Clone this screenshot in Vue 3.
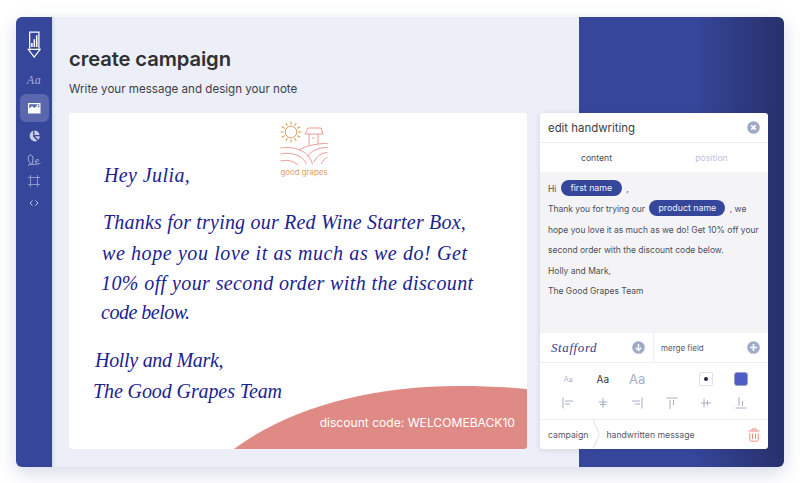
<script setup>
const sunRays = Array.from({ length: 12 }, (_, i) => i * 30)
const letterLines = [
  { text: 'Hey Julia,', cls: 'l1' },
  { text: 'Thanks for trying our Red Wine Starter Box,', cls: 'l2' },
  { text: 'we hope you love it as much as we do! Get', cls: 'l3' },
  { text: '10% off your second order with the discount', cls: 'l4' },
  { text: 'code below.', cls: 'l5' },
  { text: 'Holly and Mark,', cls: 'l6' },
  { text: 'The Good Grapes Team', cls: 'l7' }
]
</script>

<template>
  <div class="page">
    <div class="window">
      <aside class="sidebar">
        <svg class="brand" width="14" height="27" viewBox="0 0 14 28" fill="none" stroke="#fff">
          <path d="M2.5 18.5V1.2h9.6v17.3" stroke-width="1.3" />
          <path d="M1 19h12.4L7.2 27z" stroke-width="1.3" />
          <path d="M4.8 16.5v-4M7.3 16.5V8.5M9.8 16.5V4.5" stroke-width="1.6" />
        </svg>
        <span class="nav-aa">Aa</span>
        <div class="nav-active">
          <svg width="13" height="11" viewBox="0 0 13 11">
            <path fill="#fff" d="M0 0h12.5v10.5H0z" />
            <path fill="#5b67ad" d="M1.2 1.2h10.1v3.6L9 3 6.3 5 4 3 1.2 5.6z" />
            <circle cx="9.6" cy="2.4" r="1" fill="#fff" />
          </svg>
        </div>
        <svg class="nav-icon pie" width="12" height="12" viewBox="0 0 12 12">
          <path fill="#c9cde6" d="M5.2.6v6.2l4.2 4.2A5.6 5.6 0 1 1 5.2.6z" />
          <path fill="#c9cde6" d="M6.4.4A5.5 5.5 0 0 1 11.6 5H6.4zM6.8 6.2h5a5.5 5.5 0 0 1-1.500 3.600z" />
        </svg>
        <svg class="nav-icon sig" width="14" height="12" viewBox="0 0 14 12" fill="none" stroke="#aab0d6" stroke-width="1">
          <path d="M1 11c2.500-.2 4-.8 4.200-1.500C5.600 8 6 6.500 6 4.500 6 2.500 5 1 3.500 1S1.200 2.500 1.200 4.500c0 2 1.300 4.500 3.300 5.500 1 .5 2 .6 3 .4 2-.3 5-.5 6-1.400" />
          <path d="M8.500 7.500c1.300.4 3.200-.2 3.200-1.300 0-1-2-1-3 .2-.8 1.200-.2 2.800 1.300 2.800" />
        </svg>
        <svg class="nav-icon crop" width="12" height="12" viewBox="0 0 12 12" fill="none" stroke="#8f96c8" stroke-width="1">
          <path d="M0 2.500h12M0 9.500h12M2.500 0v12M9.500 0v12" />
        </svg>
        <svg class="nav-icon code" width="10" height="6" viewBox="0 0 10 6" fill="none" stroke="#c0c5e2" stroke-width="1">
          <path d="M3.500.5L1 3l2.500 2.500M6.500.5L9 3 6.500 5.500" />
        </svg>
      </aside>

      <main class="main">
        <div class="blue-panel"></div>
        <h1 class="title">create campaign</h1>
        <p class="subtitle">Write your message and design your note</p>

        <div class="workspace">
          <section class="note">
            <div class="logo">
              <svg width="48" height="46" viewBox="0 0 48 46" fill="none">
                <g stroke="#d9954f" stroke-width="0.9">
                  <circle cx="11" cy="12" r="5.800" />
                  <path
                    v-for="deg in sunRays"
                    :key="deg"
                    d="M11 4.800V1.500"
                    :transform="`rotate(${deg} 11 12)`"
                  />
                </g>
                <g stroke="#ec8f8c" stroke-width="0.9">
                  <path d="M25 14l3-6h13l2 6zM29 14v11M38 14v10" />
                  <path d="M32 18h2.500" />
                  <path d="M19 30C26 26 35 23.500 47.500 23.500M27 37c4-6 11-9.500 20.500-9.500M34 42c3-6 7-9 13.500-9.500M41 44c2-3 3.500-5.500 6.500-6.500" />
                  <path d="M.5 28c8-1.200 16-.5 24 4.500 3.500 2 6 5.500 8 11.500M.5 34c8-1.500 14-.5 20 3 2.500 1.500 4.500 4 6 7M.5 41c5-1.200 10-.8 14 1.500 1.500 1 2.500 1.500 3.500 2.500" />
                </g>
              </svg>
              <span class="logo-name">good grapes</span>
            </div>
            <div class="letter">
              <p v-for="line in letterLines" :key="line.cls" class="hand" :class="line.cls">{{ line.text }}</p>
            </div>
            <svg class="wave" width="293" height="63" viewBox="0 0 293 63">
              <path fill="#e08a85" d="M0 63C55 22 135 0 225 0c25 0 48 1 68 3v60z" />
            </svg>
            <span class="discount">discount code: WELCOMEBACK10</span>
          </section>

          <section class="panel">
            <header class="panel-head">
              <span>edit handwriting</span>
              <svg width="13" height="13" viewBox="0 0 13 13">
                <circle cx="6.500" cy="6.500" r="6.300" fill="#9fabc6" />
                <path d="M4.300 4.300l4.400 4.400M8.700 4.300l-4.400 4.400" stroke="#fff" stroke-width="1.700" />
              </svg>
            </header>
            <nav class="tabs">
              <span class="tab on">content</span>
              <span class="tab off">position</span>
            </nav>
            <div class="editor">
              <div class="eline">Hi <b class="pill pill-a">first name</b> ,</div>
              <div class="eline">Thank you for trying our <b class="pill pill-b">product name</b> , we</div>
              <div class="eline">hope you love it as much as we do! Get 10% off your</div>
              <div class="eline">second order with the discount code below.</div>
              <div class="eline">Holly and Mark,</div>
              <div class="eline">The Good Grapes Team</div>
            </div>
            <div class="pickers">
              <div class="picker font-picker">
                <span class="stafford">Stafford</span>
                <svg width="13" height="13" viewBox="0 0 13 13">
                  <circle cx="6.500" cy="6.500" r="6.300" fill="#9fabc6" />
                  <path d="M6.500 3v6.500M3.800 6.800l2.700 2.700 2.700-2.700" stroke="#fff" stroke-width="1.400" fill="none" />
                </svg>
              </div>
              <div class="picker merge-picker">
                <span>merge field</span>
                <svg width="13" height="13" viewBox="0 0 13 13">
                  <circle cx="6.500" cy="6.500" r="6.300" fill="#9fabc6" />
                  <path d="M6.500 3v7M3 6.500h7" stroke="#fff" stroke-width="1.600" />
                </svg>
              </div>
            </div>
            <div class="controls">
              <span class="cell"><span class="size small">Aa</span></span>
              <span class="cell"><span class="size medium">Aa</span></span>
              <span class="cell"><span class="size large">Aa</span></span>
              <span class="cell col5"><span class="dot-box"><i></i></span></span>
              <span class="cell col6"><span class="swatch"></span></span>
              <span class="cell"><svg class="al" viewBox="0 0 12 12"><path d="M1 .5v11M3 4h8M3 7h5" /></svg></span>
              <span class="cell"><svg class="al" viewBox="0 0 12 12"><path d="M6 1v10M1.500 5h9M3 7.500h6" /></svg></span>
              <span class="cell"><svg class="al" viewBox="0 0 12 12"><path d="M11 .5v11M1 4h8M4 7h5" /></svg></span>
              <span class="cell"><svg class="al" viewBox="0 0 12 12"><path d="M.5 1h11M4 3v9M7.500 3v5" /></svg></span>
              <span class="cell"><svg class="al" viewBox="0 0 12 12"><path d="M1 6h10M4 1.500v9M7.500 3.500v5" /></svg></span>
              <span class="cell"><svg class="al" viewBox="0 0 12 12"><path d="M.5 11h11M4 0v9M7.500 4v5" /></svg></span>
            </div>
            <footer class="crumbs">
              <span class="crumb">campaign</span>
              <svg class="chev" width="8" height="29" viewBox="0 0 8 29" fill="none"><path d="M0 0l6.500 14.500L0 29" stroke="#dfe3f0" /></svg>
              <span class="crumb second">handwritten message</span>
              <svg width="12" height="14" viewBox="0 0 12 14" fill="none" stroke="#f08b82" stroke-width="1">
                <path d="M.5 3h11M4 3V1h4v2M1.800 5.300v6.200c0 1 .6 1.700 1.700 1.700h5c1.100 0 1.700-.7 1.700-1.700V5.300M4.500 5.500V11M7.500 5.500V11" />
              </svg>
            </footer>
          </section>
        </div>
      </main>
    </div>
  </div>
</template>

<style>
html, body { margin: 0; background: #fff; }
</style>

<style scoped>
.page {
  width: 800px;
  height: 483px;
  padding: 17px 16px 16px;
  box-sizing: border-box;
  font-family: Inter, "Liberation Sans", sans-serif;
  overflow: hidden;
}
.window {
  display: flex;
  height: 450px;
  border-radius: 6px;
  overflow: hidden;
  box-shadow: 0 6px 18px rgba(70, 80, 150, 0.22);
}
.sidebar {
  width: 36px;
  flex: none;
  background: #36469a;
  display: flex;
  flex-direction: column;
  align-items: center;
  box-sizing: border-box;
  padding-top: 14px;
  position: relative;
  z-index: 2;
  box-shadow: 1px 0 3px rgba(60, 70, 140, 0.18);
}
.brand { display: block; }
.nav-aa {
  font: italic 12px "Liberation Serif", serif;
  color: #a9afd6;
  margin-top: 15px;
  line-height: 14px;
  letter-spacing: 0.5px;
}
.nav-active {
  width: 29px;
  height: 28px;
  margin-top: 7px;
  border-radius: 6px;
  background: #5b67ad;
  display: flex;
  align-items: center;
  justify-content: center;
}
.nav-icon { display: block; }
.pie { margin-top: 8px; }
.sig { margin-top: 12px; }
.crop { margin-top: 9px; }
.code { margin-top: 13px; }
.main {
  flex: 1;
  position: relative;
  background: #eceff7;
  padding-left: 17px;
  min-width: 0;
}
.blue-panel {
  position: absolute;
  top: 0;
  right: 0;
  bottom: 0;
  width: 205px;
  background: linear-gradient(90deg, #36479b 0%, #36479b 55%, #2a3474 92%, #28316d 100%);
}
.title {
  position: relative;
  margin: 0;
  padding-top: 30px;
  font-size: 20.200px;
  line-height: 24px;
  font-weight: 600;
  color: #2f3033;
  letter-spacing: -0.1px;
}
.subtitle {
  position: relative;
  margin: 9px 0 0;
  font-size: 11.600px;
  line-height: 18px;
  color: #3c3e44;
}
.workspace {
  position: relative;
  display: flex;
  gap: 13px;
  margin-top: 15px;
  height: 336px;
}
.note {
  position: relative;
  width: 458px;
  flex: none;
  background: #fff;
  border-radius: 3px;
  overflow: hidden;
}
.logo {
  display: flex;
  flex-direction: column;
  align-items: center;
  margin: 7px 0 0 12px;
  height: 57px;
}
.logo svg { display: block; flex: none; }
.logo-name {
  font-size: 7.900px;
  line-height: 11px;
  color: #e0a163;
  margin-top: 1px;
}
.hand {
  margin: 0;
  font-family: "Liberation Serif", serif;
  font-style: italic;
  font-size: 20px;
  line-height: 30px;
  color: #1b2391;
  white-space: nowrap;
}
.l1 { margin-left: 35px; margin-top: -17px; letter-spacing: 0.4px; }
.l2 { margin-left: 34px; margin-top: 17px; letter-spacing: 0.2px; }
.l3 { margin-left: 33px; margin-top: 1px; letter-spacing: 0.6px; }
.l4 { margin-left: 32px; margin-top: 0; letter-spacing: 0.4px; }
.l5 { margin-left: 32px; margin-top: -1px; letter-spacing: -0.5px; }
.l6 { margin-left: 26px; margin-top: 18px; letter-spacing: -0.3px; }
.l7 { margin-left: 24px; margin-top: 1px; letter-spacing: -0.1px; }
.wave { position: absolute; right: 0; bottom: 0; display: block; }
.discount {
  position: absolute;
  right: 12px;
  bottom: 19px;
  color: #fff;
  font-size: 12.100px;
  line-height: 15px;
}
.panel {
  width: 228px;
  flex: none;
  background: #fff;
  border-radius: 3px;
  overflow: hidden;
  display: flex;
  flex-direction: column;
  box-shadow: 0 1px 6px rgba(30, 40, 100, 0.12);
}
.panel-head {
  height: 30px;
  flex: none;
  display: flex;
  align-items: center;
  justify-content: space-between;
  padding: 0 8px;
  font-size: 11.400px;
  color: #3c3e44;
  border-bottom: 1px solid #eceef3;
  box-sizing: border-box;
}
.tabs {
  height: 29px;
  flex: none;
  display: flex;
  font-size: 8.700px;
}
.tab { flex: 1; display: flex; align-items: center; justify-content: center; }
.tab.on { color: #4a4c55; margin-right: 3px; }
.tab.off { color: #bcc2de; margin-left: -1px; }
.editor {
  flex: 1;
  background: #f4f4f6;
  padding: 7px 8px 0;
  font-size: 8.500px;
  color: #4b4e59;
}
.eline { height: 20.400px; line-height: 20.400px; white-space: nowrap; }
.pill {
  display: inline-block;
  height: 16px;
  line-height: 16px;
  border-radius: 8px;
  background: #36469a;
  color: #f1f2fa;
  font-weight: 400;
  font-size: 8.800px;
  text-align: center;
  margin: 0 2px;
  vertical-align: 1px;
}
.pill-a { width: 61px; }
.pill-b { width: 76px; }
.pickers {
  height: 29px;
  flex: none;
  display: flex;
  border-bottom: 1px solid #eceef3;
}
.picker {
  display: flex;
  align-items: center;
  justify-content: space-between;
  padding: 0 8px 0 11px;
  box-sizing: border-box;
}
.font-picker { width: 114px; border-right: 1px solid #eceef3; }
.merge-picker { flex: 1; padding-left: 7px; font-size: 8px; color: #55586a; }
.stafford {
  font: italic 13px "Liberation Serif", serif;
  color: #33408f;
  letter-spacing: 0.6px;
}
.controls {
  height: 52px;
  flex: none;
  border-bottom: 1px solid #eceef3;
  padding: 4px 11px 0;
  display: grid;
  grid-template-columns: repeat(6, 34.500px);
  grid-template-rows: 24px 24px;
}
.col5 { grid-column: 5; }
.col6 { grid-column: 6; }
.cell { display: flex; align-items: center; justify-content: center; }
.size.small { font-size: 7px; color: #aab1c9; }
.size.medium { font-size: 10px; color: #33343a; }
.size.large { font-size: 13px; color: #a8b0c8; }
.dot-box {
  width: 12px;
  height: 12px;
  border: 1px solid #dfe2ea;
  border-radius: 2px;
  display: flex;
  align-items: center;
  justify-content: center;
  background: #fff;
}
.dot-box i { width: 4px; height: 4px; border-radius: 50%; background: #23283f; }
.swatch {
  width: 12px;
  height: 12px;
  border: 1px solid #9aa0c0;
  border-radius: 3px;
  background: #4e5dc6;
}
.al { width: 12px; height: 12px; fill: none; stroke: #a6aec7; stroke-width: 1; }
.crumbs {
  height: 29px;
  flex: none;
  display: flex;
  align-items: center;
  padding: 0 8px;
  font-size: 8.700px;
  color: #55586a;
}
.crumb.second { flex: 1; margin-left: 5px; }
.chev { margin-left: 5px; flex: none; display: block; }
</style>
